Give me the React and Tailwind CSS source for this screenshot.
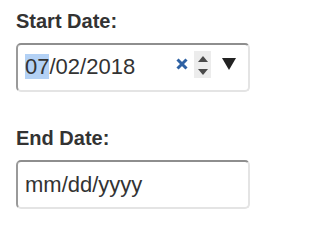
import React from "react";

function Field({ label, children, className = "" }) {
  return (
    <div className={"flex flex-col " + className}>
      <div className="h-[24px] text-[20px] leading-[24px] font-bold text-[#333333]">{label}</div>
      <div className="mt-[10px] h-[49px] w-[234px] rounded-[5px] border-2 border-t-[#8e8e8e] border-l-[#9a9a9a] border-r-[#e4e4e4] border-b-[#e4e4e4] bg-white flex items-start">
        {children}
      </div>
    </div>
  );
}

export default function App() {
  return (
    <div
      className="w-[277px] h-[234px] bg-white pt-[9px] pl-4"
      style={{ fontFamily: '"Liberation Sans", Arial, sans-serif' }}
    >
      <Field label="Start Date:">
        <div className="mt-[9px] pl-[7px] text-[22px] leading-[26px] text-[#333333] whitespace-nowrap">
          <span className="bg-[#b3d1f5]">07</span>/02/2018
        </div>
        <div className="flex-1" />
        <svg className="mt-[13px]" width="12" height="12" viewBox="0 0 12 12">
          <path d="M1.5 1.5 L10.5 10.5 M10.5 1.5 L1.5 10.5" stroke="#2e61a3" strokeWidth="3" strokeLinecap="butt" />
        </svg>
        <div className="ml-[6px] mt-[6px] w-[17px] h-[27px] bg-[#ececec] flex flex-col items-center">
          <svg className="mt-[5px]" width="10" height="6" viewBox="0 0 10 6">
            <path d="M5 0 L10 6 L0 6 Z" fill="#4a4a4a" />
          </svg>
          <svg className="mt-[7px]" width="10" height="6" viewBox="0 0 10 6">
            <path d="M0 0 L10 0 L5 6 Z" fill="#4a4a4a" />
          </svg>
        </div>
        <svg className="ml-[11px] mt-[13px] mr-[12px]" width="14" height="12" viewBox="0 0 14 12">
          <path d="M0 0 L14 0 L7 12 Z" fill="#222222" />
        </svg>
      </Field>
      <Field label="End Date:" className="mt-[34px]">
        <div className="mt-[10px] pl-[7px] text-[22px] leading-[26px] text-[#333333] whitespace-nowrap">
          mm/dd/yyyy
        </div>
      </Field>
    </div>
  );
}
